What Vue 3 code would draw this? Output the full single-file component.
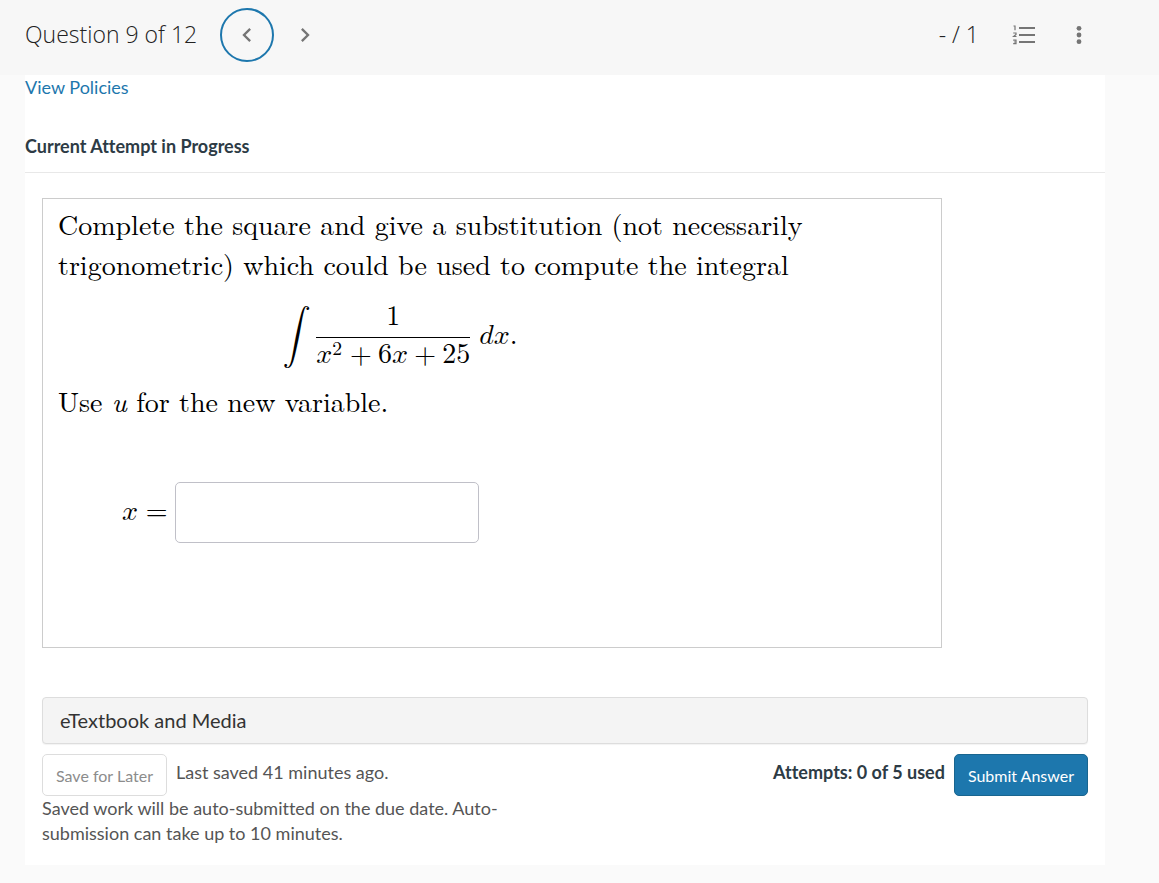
<script setup>
import { ref } from 'vue'

const question = { number: 9, total: 12, points: 1 }
const attempts = { used: 0, allowed: 5 }
const lastSaved = '41 minutes ago'

const answer = ref('')
</script>

<template>
  <div class="page">
    <header class="topbar">
      <h1 class="title">Question {{ question.number }} of {{ question.total }}</h1>
      <button type="button" class="nav-btn active" aria-label="Previous question">
        <svg width="28" height="28" viewBox="0 0 24 24" fill="#757575">
          <path d="M15.4 7.4L14 6l-6 6 6 6 1.4-1.4L10.8 12z" />
        </svg>
      </button>
      <button type="button" class="nav-btn" aria-label="Next question">
        <svg width="28" height="28" viewBox="0 0 24 24" fill="#757575">
          <path d="M10 6L8.600 7.400 13.200 12l-4.600 4.600L10 18l6-6z" />
        </svg>
      </button>
      <span class="score">- / {{ question.points }}</span>
      <button type="button" class="icon-btn" aria-label="Question list">
        <svg width="24" height="24" viewBox="0 0 24 24" fill="none" stroke="#757575">
          <path d="M7 5h16M7 12h16M7 19h16" stroke-width="2" />
          <path
            d="M1.500 3h1.500v4.200M1.200 10h2.800v1.400L1.600 13.500h2.900M1.200 17.200h2.800v3.500H1.200M1.900 19h1.900"
            stroke-width="1.2"
          />
        </svg>
      </button>
      <button type="button" class="icon-btn" aria-label="More options">
        <svg width="24" height="24" viewBox="0 0 24 24" fill="#757575">
          <circle cx="12" cy="5.300" r="2.400" />
          <circle cx="12" cy="12" r="2.400" />
          <circle cx="12" cy="18.700" r="2.400" />
        </svg>
      </button>
    </header>

    <main class="content">
      <a href="#" class="policies">View Policies</a>
      <h2 class="attempt">Current Attempt in Progress</h2>

      <section class="body">
        <div class="question">
          <p>
            Complete the square and give a substitution (not necessarily<br />
            trigonometric) which could be used to compute the integral
          </p>
          <div class="integral">
            <math display="block">
              <mo>∫</mo>
              <mfrac>
                <mn>1</mn>
                <mrow>
                  <msup><mi>x</mi><mn>2</mn></msup>
                  <mo>+</mo>
                  <mn>6</mn><mi>x</mi>
                  <mo>+</mo>
                  <mn>25</mn>
                </mrow>
              </mfrac>
              <mspace width="8px" />
              <mi>d</mi><mi>x</mi><mtext>.</mtext>
            </math>
          </div>
          <p>Use <i>u</i> for the new variable.</p>
          <div class="answer">
            <label for="answer">
              <math><mi>x</mi><mo>=</mo></math>
            </label>
            <input id="answer" v-model="answer" type="text" autocomplete="off" />
          </div>
        </div>

        <button type="button" class="etext">eTextbook and Media</button>

        <div class="actions">
          <button type="button" class="btn save">Save for Later</button>
          <span class="saved">Last saved {{ lastSaved }}.</span>
          <span class="attempts">Attempts: {{ attempts.used }} of {{ attempts.allowed }} used</span>
          <button type="button" class="btn submit">Submit Answer</button>
        </div>
        <p class="note">
          Saved work will be auto-submitted on the due date. Auto-submission can take up to 10 minutes.
        </p>
      </section>
    </main>
  </div>
</template>

<style>
body {
  margin: 0;
  background: #fafafa;
}
</style>

<style scoped>
.page {
  color: #2d3b45;
  font-family: Lato, sans-serif;
  font-size: 18px;
  font-variant-ligatures: none;
}

.page * {
  box-sizing: border-box;
}

button {
  padding: 0;
  border: 0;
  background: none;
  font-family: inherit;
  cursor: pointer;
}

svg {
  display: block;
}

.topbar {
  display: flex;
  align-items: center;
  height: 75px;
  padding: 0 68px 5px 25px;
  background: #f7f7f7;
  color: #222;
  font-family: 'Open Sans', sans-serif;
}

.title,
.score {
  font-size: 23px;
  font-weight: 300;
  line-height: 28px;
  padding-bottom: 2px;
}

.title {
  margin: 0 23px 0 0;
}

.score {
  margin-left: auto;
}

.nav-btn {
  display: grid;
  place-items: center;
  width: 54px;
  height: 54px;
  margin-right: 4px;
  border-radius: 50%;
}

.nav-btn.active {
  border: 2px solid #1d77ad;
}

.icon-btn {
  margin-left: 33px;
}

.icon-btn + .icon-btn {
  margin-left: 31px;
}

.content {
  margin: 0 54px 18px 25px;
  background: white;
}

.policies {
  display: block;
  color: #1d77ad;
  line-height: 24px;
  text-decoration: none;
}

.attempt {
  margin: 0;
  padding: 35px 0 14px;
  border-bottom: 1px solid #e8e8e8;
  font-size: 18px;
  font-weight: 700;
  line-height: 24px;
}

.body {
  padding: 25px 17px 19px;
}

.question {
  max-width: 900px;
  height: 450px;
  padding: 4px 15px;
  border: 1px solid #ccc;
  color: black;
  font-family: 'Latin Modern Roman', 'CMU Serif', 'Liberation Serif', serif;
  font-size: 28px;
  line-height: 40px;
}

.question p {
  margin: 0;
}

.question math {
  font-family: 'Latin Modern Math', 'CMU Serif', 'Liberation Serif', serif;
  font-size: 28px;
}

.integral {
  display: flex;
  align-items: center;
  height: 97px;
  padding: 10px 0 0 220px;
}

.answer {
  display: flex;
  align-items: center;
  margin-top: 62px;
  padding-left: 64px;
}

.answer label {
  padding-bottom: 10px;
}

.answer input {
  width: 304px;
  height: 61px;
  padding: 0 12px;
  border: 1px solid #c0c0c8;
  border-radius: 5px;
  background: white;
  font: inherit;
}

.etext {
  display: block;
  width: 100%;
  height: 47px;
  margin-top: 49px;
  padding: 0 17px 2px;
  border: 1px solid #ddd;
  border-radius: 4px;
  background: #f4f4f4;
  box-shadow: 0 1px 1px rgba(0, 0, 0, 0.05);
  color: #333;
  font-size: 20px;
  text-align: left;
}

.actions {
  display: flex;
  margin-top: 10px;
  line-height: 36px;
}

.btn {
  height: 42px;
  padding: 0 13px;
  border: 1px solid #ddd;
  border-radius: 5px;
  font-size: 16px;
}

.save {
  background: white;
  color: #8c8c8c;
}

.saved {
  margin-left: 9px;
  color: #555;
}

.attempts {
  margin: 0 9px 0 auto;
  font-weight: 700;
}

.submit {
  border-color: #19658f;
  background: #1d77ad;
  color: white;
}

.note {
  max-width: 460px;
  margin: 0;
  color: #555;
  line-height: 25px;
}
</style>
